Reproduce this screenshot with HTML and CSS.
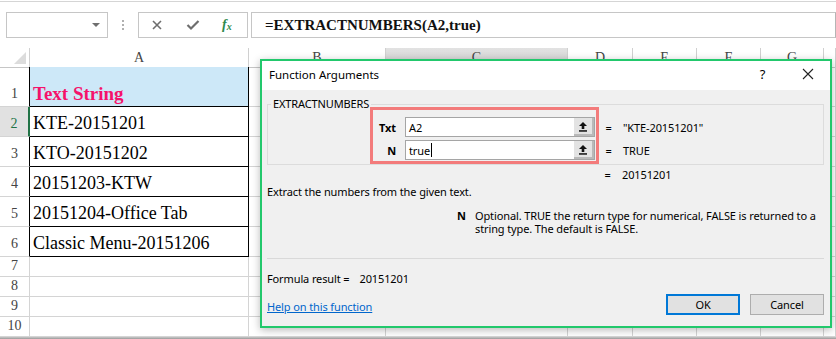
FILE: index.html
```html
<!DOCTYPE html>
<html>
<head>
<meta charset="utf-8">
<link rel="stylesheet" href="styles.css">
</head>
<body>
<div class="app">
  <div class="edge"></div>
  <div class="toolbar">
    <div class="namebox"><span class="dd"></span></div>
    <div class="dots"><i></i><i></i><i></i></div>
    <div class="fbtns">
      <svg class="ico" width="12" height="12" viewBox="0 0 12 12"><path d="M2 2 L10 10 M10 2 L2 10" stroke="#6e6e6e" stroke-width="1.6" fill="none"/></svg>
      <svg class="ico" width="14" height="12" viewBox="0 0 14 12"><path d="M1.5 6 L5 9.5 L12.5 2" stroke="#6e6e6e" stroke-width="2.2" fill="none"/></svg>
      <span class="fx">f<sub>x</sub></span>
    </div>
    <div class="formula">=EXTRACTNUMBERS(A2,true)</div>
  </div>

  <div class="sheet">
    <div class="row hdr">
      <div class="corner"><span class="tri"></span></div>
      <div class="ch">A</div><div class="ch">B</div><div class="ch sel">C</div><div class="ch">D</div><div class="ch">E</div><div class="ch">F</div><div class="ch">G</div><div class="ch"></div>
    </div>
    <div class="row r1">
      <div class="rh tb">1</div><div class="c a head">Text String</div><div class="c"></div><div class="c"></div><div class="c"></div><div class="c"></div><div class="c"></div><div class="c"></div><div class="c"></div>
    </div>
    <div class="row r2">
      <div class="rh tb act">2</div><div class="c a">KTE-20151201</div><div class="c"></div><div class="c"></div><div class="c"></div><div class="c"></div><div class="c"></div><div class="c"></div><div class="c"></div>
    </div>
    <div class="row r2">
      <div class="rh tb">3</div><div class="c a">KTO-20151202</div><div class="c"></div><div class="c"></div><div class="c"></div><div class="c"></div><div class="c"></div><div class="c"></div><div class="c"></div>
    </div>
    <div class="row r2">
      <div class="rh tb">4</div><div class="c a">20151203-KTW</div><div class="c"></div><div class="c"></div><div class="c"></div><div class="c"></div><div class="c"></div><div class="c"></div><div class="c"></div>
    </div>
    <div class="row r2">
      <div class="rh tb">5</div><div class="c a">20151204-Office Tab</div><div class="c"></div><div class="c"></div><div class="c"></div><div class="c"></div><div class="c"></div><div class="c"></div><div class="c"></div>
    </div>
    <div class="row r2">
      <div class="rh tb">6</div><div class="c a">Classic Menu-20151206</div><div class="c"></div><div class="c"></div><div class="c"></div><div class="c"></div><div class="c"></div><div class="c"></div><div class="c"></div>
    </div>
    <div class="row r7">
      <div class="rh">7</div><div class="c"></div><div class="c"></div><div class="c"></div><div class="c"></div><div class="c"></div><div class="c"></div><div class="c"></div><div class="c"></div>
    </div>
    <div class="row r7">
      <div class="rh">8</div><div class="c"></div><div class="c"></div><div class="c"></div><div class="c"></div><div class="c"></div><div class="c"></div><div class="c"></div><div class="c"></div>
    </div>
    <div class="row r7">
      <div class="rh">9</div><div class="c"></div><div class="c"></div><div class="c"></div><div class="c"></div><div class="c"></div><div class="c"></div><div class="c"></div><div class="c"></div>
    </div>
    <div class="row r7">
      <div class="rh">10</div><div class="c"></div><div class="c"></div><div class="c"></div><div class="c"></div><div class="c"></div><div class="c"></div><div class="c"></div><div class="c"></div>
    </div>
    <div class="bottom"></div>
  </div>

  <div class="dlg">
    <div class="dlg-title">
      <span class="ttl">Function Arguments</span>
      <span class="tbtn">?</span>
      <span class="tbtn"><svg width="12" height="12" viewBox="0 0 12 12"><path d="M1 1 L11 11 M11 1 L1 11" stroke="#222" stroke-width="1.1" fill="none"/></svg></span>
    </div>
    <div class="dlg-body">
      <div class="group">
        <div class="legend">EXTRACTNUMBERS</div>
        <div class="arg">
          <span class="lbl">Txt</span>
          <div class="input"><span class="itext">A2</span><span class="pick"><svg width="10" height="11" viewBox="0 0 10 11"><path d="M5 1 L9 5 L6.3 5 L6.3 8 L3.7 8 L3.7 5 L1 5 Z" fill="#111"/><rect x="1" y="9.2" width="8" height="1.5" fill="#111"/></svg></span></div>
          <span class="eq">=</span><span class="val">"KTE-20151201"</span>
        </div>
        <div class="arg">
          <span class="lbl">N</span>
          <div class="input"><span class="itext">true<span class="caret"></span></span><span class="pick"><svg width="10" height="11" viewBox="0 0 10 11"><path d="M5 1 L9 5 L6.3 5 L6.3 8 L3.7 8 L3.7 5 L1 5 Z" fill="#111"/><rect x="1" y="9.2" width="8" height="1.5" fill="#111"/></svg></span></div>
          <span class="eq">=</span><span class="val">TRUE</span>
        </div>
      </div>
      <div class="resline"><span class="eq">=</span><span class="val">20151201</span></div>
      <p class="desc">Extract the numbers from the given text.</p>
      <div class="argdesc">
        <b>N</b>
        <p>Optional. TRUE the return type for numerical, FALSE is returned to a<br>string type. The default is FALSE.</p>
      </div>
      <div class="sep"></div>
      <div class="fres">Formula result =<span>20151201</span></div>
      <div class="footer">
        <a class="help">Help on this function</a>
        <div class="btns"><span class="btn ok">OK</span><span class="btn">Cancel</span></div>
      </div>
    </div>
    <div class="redbox"></div>
  </div>
</div>
</body>
</html>
```

FILE: styles.css
```css
* { box-sizing: border-box; }
html, body { margin: 0; padding: 0; }
body { width: 836px; height: 339px; overflow: hidden; background: #fff; font-family: "Liberation Serif", serif; }
.app { position: relative; width: 836px; height: 339px; }
.edge { height: 1px; margin-top: 1px; background: #d5d5d5; }

.toolbar { display: flex; height: 26px; margin-top: 10px; }
.namebox { width: 102px; margin-left: 6px; border: 1px solid #c6c6c6; position: relative; display: flex; align-items: center; justify-content: flex-end; padding-right: 7px; }
.dd { width: 0; height: 0; border-left: 4px solid transparent; border-right: 4px solid transparent; border-top: 4px solid #6f6f6f; }
.dots { width: 30px; display: flex; flex-direction: column; align-items: center; justify-content: center; gap: 2px; }
.dots i { width: 2px; height: 2px; background: #b0b0b0; display: block; }
.fbtns { width: 110px; border: 1px solid #c6c6c6; display: flex; align-items: center; padding-left: 12px; gap: 0; }
.fbtns .ico:first-child { margin-right: 23px; }
.fbtns .ico:nth-child(2) { margin-right: 22px; }
.fx { color: #2f8a4e; font-style: italic; font-weight: bold; font-size: 14px; font-family: "Liberation Serif", serif; line-height: 1; }
.fx sub { font-size: 10px; vertical-align: -1px; }
.formula { flex: 1; margin-left: 3px; border: 1px solid #c6c6c6; border-right-color: #b5b5b5; font-weight: bold; font-size: 15px; padding-left: 13px; line-height: 24px; color: #111; }

.sheet { margin-top: 10px; }
.row { display: grid; grid-template-columns: 30px 219px 137px 182px 65px 64px 64px 63px 12px; }
.hdr { height: 19px; }
.r1 { height: 40px; }
.r2 { height: 30px; }
.r7 { height: 20px; }
.row > div { border-right: 1px solid #d4d4d4; border-bottom: 1px solid #d4d4d4; }
.hdr > div { border-bottom-color: #c6c6c6; border-right-color: #d0d0d0; }
.ch { font-size: 14px; color: #444; text-align: center; line-height: 19px; background: #fff; }
.ch.sel { background: linear-gradient(#e2e2e2, #d0d0d0); }
.corner { display: flex; align-items: flex-end; justify-content: flex-end; padding: 0 3px 3px 0; }
.tri { width: 0; height: 0; border-left: 12px solid transparent; border-bottom: 12px solid #dcdcdc; }
.rh { font-size: 14px; color: #444; text-align: center; display: flex; align-items: flex-end; justify-content: center; padding-bottom: 2px; line-height: 16px; }
.rh.tb { border-right-color: #000 !important; padding-bottom: 4px; }
.rh.act { background: #e1e1e1; color: #217346; border-right: 2px solid #217346 !important; }
.row > .c.a { border-right-color: #000; border-bottom-color: #000; font-size: 18px; color: #000; padding-left: 3px; display: flex; align-items: flex-end; line-height: 20px; padding-bottom: 3px; }
.row > .c.head { background: #cde8f8; color: #f5126b; font-weight: bold; font-size: 19px; padding-bottom: 2px; }
.bottom { height: 2px; background: linear-gradient(#c8c8c8, #9a9a9a); }

.dlg { position: absolute; left: 260px; top: 58px; width: 572px; height: 269px; border: 2px solid #22c86c; background: #f0f0f0; box-shadow: 0 2px 8px rgba(0,0,0,0.28); font-family: "Noto Sans", sans-serif; font-size: 11px; letter-spacing: -0.12px; color: #000; white-space: nowrap; }
.dlg-title { height: 29px; background: #fff; display: flex; align-items: center; padding: 0 0 3px 7px; }
.ttl { flex: 1; font-size: 11.5px; letter-spacing: 0; }
.tbtn { width: 45px; display: flex; justify-content: center; align-items: center; font-size: 13px; }
.dlg-body { padding: 14px 6px 0 5px; }
.group { border: 1px solid #dcdcdc; padding-bottom: 4px; }
.legend { margin: -8px 0 0 3px; padding: 0 2px; height: 14px; line-height: 14px; background: #f0f0f0; width: fit-content; }
.arg { display: flex; align-items: center; height: 20px; margin-top: 6px; }
.arg + .arg { margin-top: 3px; }
.lbl { width: 128px; text-align: right; font-weight: bold; margin-right: 9px; }
.input { width: 190px; height: 20px; border: 1px solid #a5a5a5; background: #fff; display: flex; align-items: center; }
.itext { flex: 1; padding-left: 3px; display: flex; align-items: center; }
.caret { width: 1px; height: 14px; background: #000; margin-left: 1px; }
.pick { width: 20px; height: 18px; background: #e3e3e3; border-right: 2px solid #b9b9b9; border-bottom: 2px solid #b9b9b9; display: flex; align-items: center; justify-content: center; }
.eq { margin-left: 10px; width: 7px; text-align: center; }
.val { margin-left: 11px; }
.resline { display: flex; margin: 3px 0 0 327px; line-height: 13px; height: 13px; }
.desc { margin: 4px 0 0 0; line-height: 13px; }
.argdesc { display: flex; margin: 11px 0 0 190px; line-height: 13px; }
.argdesc b { width: 18px; }
.argdesc p { margin: 0; }
.sep { height: 1px; background: #d9d9d9; margin-top: 23px; }
.fres { margin-top: 13px; line-height: 13px; }
.fres span { margin-left: 10px; }
.footer { display: flex; justify-content: space-between; align-items: center; margin-top: 9px; }
.help { color: #0066cc; text-decoration: underline; padding-top: 3px; }
.btns { display: flex; gap: 10px; }
.btn { width: 74px; height: 21px; background: #e1e1e1; border: 1px solid #adadad; display: flex; align-items: center; justify-content: center; }
.btn.ok { border: 2px solid #0078d7; }
.redbox { position: absolute; left: 108px; top: 46px; width: 229px; height: 57px; border: 3px solid #f37b7b; }
```
